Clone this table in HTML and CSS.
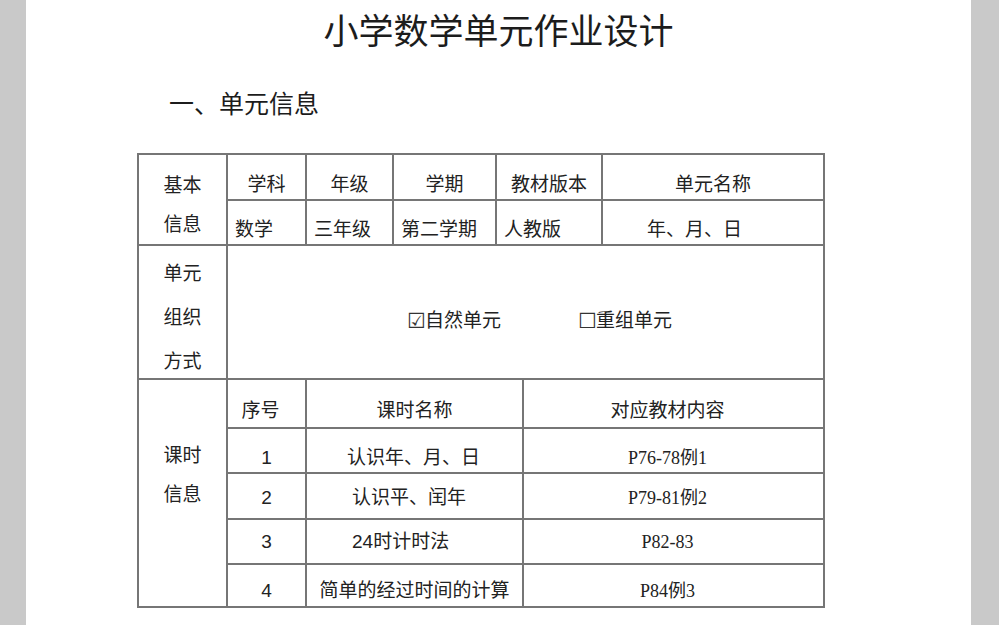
FILE: index.html
```html
<!DOCTYPE html>
<html lang="zh-CN">
<head>
<meta charset="utf-8">
<title>小学数学单元作业设计</title>
<link rel="stylesheet" href="styles.css">
</head>
<body>
<div class="page">
  <h1 class="title">小学数学单元作业设计</h1>
  <h2 class="section">一、单元信息</h2>
  <div class="grid">
    <div class="cell c-basic">基本<br>信息</div>
    <div class="cell r1">学科</div>
    <div class="cell r1">年级</div>
    <div class="cell r1">学期</div>
    <div class="cell r1 span2">教材版本</div>
    <div class="cell r1">单元名称</div>

    <div class="cell r2 left">数学</div>
    <div class="cell r2 left">三年级</div>
    <div class="cell r2 left">第二学期</div>
    <div class="cell r2 left span2">人教版</div>
    <div class="cell r2 left unit-name">年、月、日</div>

    <div class="cell c-org">单元<br>组织<br>方式</div>
    <div class="cell options">
      <span class="opt"><span class="box">☑</span>自然单元</span>
      <span class="opt"><span class="box">☐</span>重组单元</span>
    </div>

    <div class="cell c-lesson">课时<br>信息</div>
    <div class="cell r4 seq-head">序号</div>
    <div class="cell r4 span3">课时名称</div>
    <div class="cell r4 span2 book">对应教材内容</div>

    <div class="cell r5">1</div>
    <div class="cell r5 span3 left name1">认识年、月、日</div>
    <div class="cell r5 span2 book serif">P76-78例1</div>

    <div class="cell r6">2</div>
    <div class="cell r6 span3 left name2">认识平、闰年</div>
    <div class="cell r6 span2 book serif">P79-81例2</div>

    <div class="cell r7">3</div>
    <div class="cell r7 span3 left name2">24时计时法</div>
    <div class="cell r7 span2 book serif">P82-83</div>

    <div class="cell r8">4</div>
    <div class="cell r8 span3">简单的经过时间的计算</div>
    <div class="cell r8 span2 book serif">P84例3</div>
  </div>
</div>
</body>
</html>
```
FILE: styles.css
```css
html, body {
  margin: 0;
  padding: 0;
}
body {
  background: #c9c9c9;
  font-family: "Liberation Sans", "Noto Sans CJK SC", sans-serif;
  color: #222;
  overflow: hidden;
}
.page {
  width: 945px;
  height: 625px;
  margin-left: 26px;
  background: #fff;
  overflow: hidden;
}
.title {
  margin: 11px 0 0;
  font-size: 35px;
  line-height: 35px;
  font-weight: 400;
  text-align: center;
  color: #1c1c1c;
  font-family: "Noto Sans CJK SC", sans-serif;
}
.section {
  margin: 44px 0 0 143px;
  font-size: 25px;
  line-height: 25px;
  font-weight: 400;
  color: #1c1c1c;
  font-family: "Noto Sans CJK SC", sans-serif;
}
.grid {
  margin: 38px 0 0 111px;
  width: 688px;
  box-sizing: border-box;
  display: grid;
  grid-template-columns: 87px 77px 85px 101px 25px 77px 220px;
  grid-template-rows: 44px 43px 132px 47px 43px 44px 43px 41px;
  gap: 2px;
  padding: 2px;
  background: #767676;
}
.cell {
  background: #fff;
  display: flex;
  align-items: center;
  justify-content: center;
  font-size: 19px;
  line-height: 20px;
  box-sizing: border-box;
  white-space: nowrap;
  text-align: center;
}
.span2 { grid-column: span 2; }
.span3 { grid-column: span 3; }
.left { justify-content: flex-start; padding-left: 7px; }
.r1 { padding-top: 15px; }
.r2 { padding-top: 15px; }
.r4 { padding-top: 15px; }
.r5 { padding-top: 15px; }
.r6 { padding-top: 3px; }
.r7 { padding-top: 0; }
.r8 { padding-top: 11px; }
.c-basic {
  grid-row: span 2;
  line-height: 39px;
  padding-top: 11px;
}
.c-org {
  line-height: 44px;
  padding-top: 11px;
}
.c-lesson {
  grid-row: span 5;
  line-height: 39px;
  align-items: flex-start;
  padding-top: 56px;
}
.unit-name { padding-left: 44px; }
.options {
  grid-column: span 6;
  justify-content: flex-start;
  padding-left: 181px;
  padding-top: 17px;
}
.opt {
  width: 171px;
  display: flex;
  align-items: center;
}
.box {
  font-family: "DejaVu Sans", sans-serif;
  font-size: 21px;
  width: 18px;
  display: inline-block;
  color: #333;
  margin-left: -2px;
}
.seq-head { padding-right: 12px; }
.name1 { padding-left: 40px; }
.name2 { padding-left: 45px; }
.book { padding-right: 12px; }
.serif {
  font-family: "Liberation Serif", "Noto Sans CJK SC", serif;
  font-size: 18px;
}
```
